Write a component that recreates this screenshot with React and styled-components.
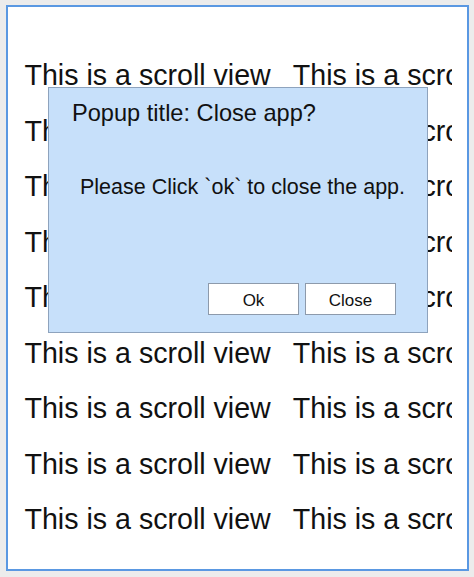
import React from "react";
import styled, { createGlobalStyle } from "styled-components";

const GlobalStyle = createGlobalStyle`
  html, body {
    margin: 0;
    padding: 0;
    background: #ececec;
    font-family: "Liberation Sans", Arial, sans-serif;
    color: #111;
  }
`;

const ROWS = 9;

export default function App() {
  return (
    <>
      <GlobalStyle />
      <Frame>
        <Viewport>
          {Array.from({ length: ROWS }).map((_, i) => (
            <Row key={i}>
              <Cell>This is a scroll view</Cell>
              <Cell>This is a scroll view</Cell>
            </Row>
          ))}
        </Viewport>
        <Popup>
          <Title>Popup title: Close app?</Title>
          <Message>Please Click `ok` to close the app.</Message>
          <Buttons>
            <Button>Ok</Button>
            <Button>Close</Button>
          </Buttons>
        </Popup>
      </Frame>
    </>
  );
}

const Frame = styled.div`
  position: relative;
  box-sizing: border-box;
  margin: 5px 5px 0 6px;
  height: 566px;
  border: 2px solid #5a98e2;
  background: #fff;
  overflow: hidden;
`;

const Viewport = styled.div`
  box-sizing: border-box;
  width: 444px;
  padding: 41px 0 0 16.5px;
  overflow: hidden;
`;

const Row = styled.div`
  display: flex;
  height: 55.5px;
  line-height: 55.5px;
  white-space: nowrap;
`;

const Cell = styled.span`
  flex: none;
  font-size: 28.6px;
  margin-right: 22px;
`;

const Popup = styled.div`
  position: absolute;
  left: 40px;
  top: 80px;
  box-sizing: border-box;
  width: 380px;
  height: 246px;
  border: 1px solid #8ea3bd;
  background: #c7e0fa;
  display: flex;
  flex-direction: column;
  padding: 11px 31px 17px 23px;
`;

const Title = styled.div`
  font-size: 23.6px;
  line-height: 28px;
`;

const Message = styled.div`
  margin-top: 46.5px;
  padding-left: 8px;
  font-size: 21.5px;
  line-height: 26px;
  white-space: nowrap;
`;

const Buttons = styled.div`
  margin-top: auto;
  display: flex;
  justify-content: flex-end;
  gap: 6px;
`;

const Button = styled.button`
  box-sizing: border-box;
  width: 91px;
  height: 32px;
  padding: 3px 0 0;
  border: 1.5px solid #8d9aab;
  border-radius: 0;
  background: #fff;
  font-family: "Liberation Sans", Arial, sans-serif;
  font-size: 17px;
  color: #111;
`;
